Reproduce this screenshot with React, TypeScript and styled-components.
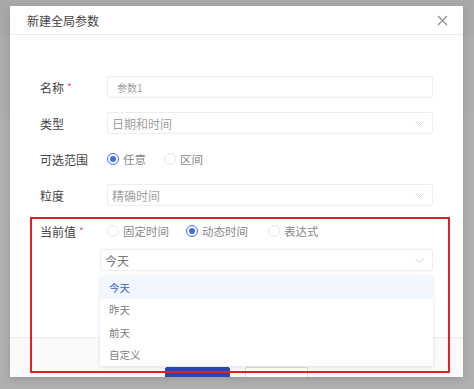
import styled, { createGlobalStyle } from "styled-components";

const GlobalStyle = createGlobalStyle`
  html, body {
    margin: 0;
    padding: 0;
    background: #aaaaaa;
    font-family: "Noto Sans CJK SC", "Noto Sans", sans-serif;
  }
`;

const Page = styled.div`
  width: 474px;
  height: 389px;
  padding: 6px 0 0 10px;
  box-sizing: border-box;
  background: linear-gradient(#a9a9a9 0 35px, #adadad 35px 113px, #b0b0b0 113px);
`;

const Modal = styled.div`
  position: relative;
  width: 453px;
  height: 371px;
  background: #fff;
  overflow: hidden;
  box-shadow: 0 2px 8px rgba(0, 0, 0, 0.15);
`;

const Header = styled.div`
  height: 29px;
  display: flex;
  align-items: center;
  justify-content: space-between;
  padding: 0 15px 0 17px;
  border-bottom: 1px solid #ececec;
  box-sizing: border-box;
`;

const Title = styled.div`
  font-size: 12px;
  color: #444;
`;

const Body = styled.div`
  height: 302px;
  box-sizing: border-box;
  padding: 41px 30px 0 30px;
  display: flex;
  flex-direction: column;
  gap: 14px;
`;

const Row = styled.div<{ $top?: boolean }>`
  display: flex;
  align-items: ${(p) => (p.$top ? "flex-start" : "center")};
  height: ${(p) => (p.$top ? "auto" : "22px")};
`;

const Label = styled.div`
  width: 67px;
  height: 22px;
  flex-shrink: 0;
  display: flex;
  align-items: center;
  font-size: 12px;
  color: #444;
`;

const Star = styled.span`
  color: #f05050;
  font-size: 10px;
  line-height: 1;
  margin-left: 3px;
`;

const Field = styled.div<{ $size?: number; $pad?: number; $color?: string }>`
  flex: 1;
  height: 22px;
  box-sizing: border-box;
  border: 1px solid #ededed;
  border-radius: 2px;
  display: flex;
  align-items: center;
  justify-content: space-between;
  padding: 0 8px 0 ${(p) => p.$pad ?? 4}px;
  font-size: ${(p) => p.$size ?? 12}px;
  color: ${(p) => p.$color ?? "#a0a0a0"};
`;

const Chevron = () => (
  <svg width="9" height="5" viewBox="0 0 9 5">
    <path d="M0.5 0.5l4 4 4-4" fill="none" stroke="#d0d0d0" strokeWidth="1" />
  </svg>
);

const RadioGroup = styled.div`
  display: flex;
  align-items: center;
  height: 22px;
`;

const RadioItem = styled.div<{ $gap: number }>`
  display: flex;
  align-items: center;
  margin-right: ${(p) => p.$gap}px;
  font-size: 11.5px;
  color: #888;
`;

const Circle = styled.span<{ $on?: boolean }>`
  width: 12px;
  height: 12px;
  box-sizing: border-box;
  border-radius: 50%;
  border: 1px solid ${(p) => (p.$on ? "#3b6ef0" : "#e6e6e6")};
  margin-right: 4px;
  display: flex;
  align-items: center;
  justify-content: center;
  &::after {
    content: "";
    width: 6px;
    height: 6px;
    border-radius: 50%;
    background: ${(p) => (p.$on ? "#3b6ef0" : "transparent")};
  }
`;

const Stack = styled.div`
  flex: 1;
  display: flex;
  flex-direction: column;
  gap: 7px;
`;

const SelectWrap = styled.div`
  position: relative;
  display: flex;
  margin-left: -7px;
`;

const Dropdown = styled.div`
  position: absolute;
  top: calc(100% + 5px);
  left: 0;
  right: 0;
  background: #fff;
  box-shadow: 0 1px 4px rgba(0, 0, 0, 0.12);
  z-index: 2;
`;

const Option = styled.div<{ $active?: boolean }>`
  height: 22.5px;
  display: flex;
  align-items: center;
  padding-left: 9px;
  font-size: 10.5px;
  color: ${(p) => (p.$active ? "#3c5fd6" : "#808080")};
  background: ${(p) => (p.$active ? "#f2f6ff" : "#fff")};
`;

const Footer = styled.div`
  border-top: 1px solid #ececec;
  background: #fafafa;
  height: 40px;
  padding-top: 29px;
  display: flex;
  justify-content: center;
  gap: 15px;
`;

const Button = styled.div<{ $primary?: boolean }>`
  width: ${(p) => (p.$primary ? 65 : 63)}px;
  height: 26px;
  box-sizing: border-box;
  border-radius: 2px;
  background: ${(p) => (p.$primary ? "#2a49b6" : "#fff")};
  border: 1px solid ${(p) => (p.$primary ? "#2a49b6" : "#dcdcdc")};
`;

const Highlight = styled.div`
  position: absolute;
  left: 20px;
  top: 211px;
  width: 420px;
  height: 156px;
  box-sizing: border-box;
  border: 2px solid #e01f26;
  pointer-events: none;
  z-index: 3;
`;

const Close = () => (
  <svg width="11" height="11" viewBox="0 0 11 11">
    <path d="M1 1l9 9M10 1l-9 9" stroke="#888" strokeWidth="1.1" />
  </svg>
);

export default function App() {
  return (
    <>
      <GlobalStyle />
      <Page>
        <Modal>
          <Header>
            <Title>新建全局参数</Title>
            <Close />
          </Header>
          <Body>
            <Row>
              <Label>
                名称<Star>*</Star>
              </Label>
              <Field $size={10} $pad={9}>
                参数1
              </Field>
            </Row>
            <Row>
              <Label>类型</Label>
              <Field>
                日期和时间
                <Chevron />
              </Field>
            </Row>
            <Row>
              <Label>可选范围</Label>
              <RadioGroup>
                <RadioItem $gap={18}>
                  <Circle $on />
                  任意
                </RadioItem>
                <RadioItem $gap={0}>
                  <Circle />
                  区间
                </RadioItem>
              </RadioGroup>
            </Row>
            <Row>
              <Label>粒度</Label>
              <Field>
                精确时间
                <Chevron />
              </Field>
            </Row>
            <Row $top>
              <Label>
                当前值<Star>*</Star>
              </Label>
              <Stack>
                <RadioGroup>
                  <RadioItem $gap={17}>
                    <Circle />
                    固定时间
                  </RadioItem>
                  <RadioItem $gap={20}>
                    <Circle $on />
                    动态时间
                  </RadioItem>
                  <RadioItem $gap={0}>
                    <Circle />
                    表达式
                  </RadioItem>
                </RadioGroup>
                <SelectWrap>
                  <Field $size={12} $color="#777">
                    今天
                    <Chevron />
                  </Field>
                  <Dropdown>
                    <Option $active>今天</Option>
                    <Option>昨天</Option>
                    <Option>前天</Option>
                    <Option>自定义</Option>
                  </Dropdown>
                </SelectWrap>
              </Stack>
            </Row>
          </Body>
          <Footer>
            <Button $primary />
            <Button />
          </Footer>
          <Highlight />
        </Modal>
      </Page>
    </>
  );
}
